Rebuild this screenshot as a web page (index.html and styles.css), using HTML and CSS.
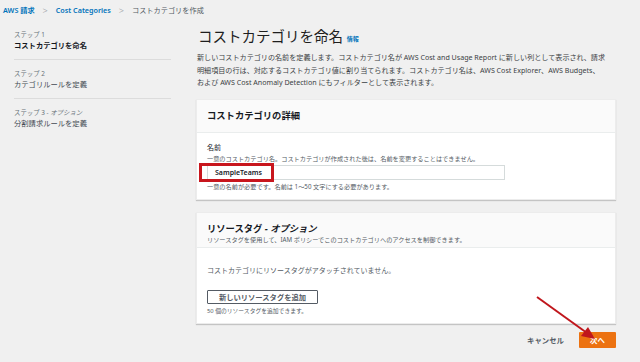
FILE: index.html
```html
<!DOCTYPE html>
<html lang="ja">
<head>
<meta charset="utf-8">
<link rel="stylesheet" href="styles.css">
</head>
<body>
<div class="page">
  <nav class="crumbs">
    <a class="crumb-link">AWS 請求</a>
    <span class="sep">&gt;</span>
    <a class="crumb-link">Cost Categories</a>
    <span class="sep">&gt;</span>
    <span class="crumb-current">コストカテゴリを作成</span>
  </nav>
  <div class="layout">
    <aside class="steps">
      <div class="step">
        <div class="step-label">ステップ 1</div>
        <div class="step-title active">コストカテゴリを命名</div>
      </div>
      <div class="step">
        <div class="step-label">ステップ 2</div>
        <div class="step-title">カテゴリルールを定義</div>
      </div>
      <div class="step last">
        <div class="step-label">ステップ 3 <i>- オプション</i></div>
        <div class="step-title">分割請求ルールを定義</div>
      </div>
    </aside>
    <main class="main">
      <h1 class="title">コストカテゴリを命名 <span class="info">情報</span></h1>
      <p class="desc">新しいコストカテゴリの名前を定義します。コストカテゴリ名が AWS Cost and Usage Report に新しい列として表示され、請求<br>明細項目の行は、対応するコストカテゴリ値に割り当てられます。コストカテゴリ名は、AWS Cost Explorer、AWS Budgets、<br>および AWS Cost Anomaly Detection にもフィルターとして表示されます。</p>

      <section class="card">
        <div class="card-head card-head-1">
          <h2 class="card-title">コストカテゴリの詳細</h2>
        </div>
        <div class="card-body body-1">
          <div class="field-label">名前</div>
          <div class="field-desc">一意のコストカテゴリ名。コストカテゴリが作成された後は、名前を変更することはできません。</div>
          <div class="input-wrap">
            <div class="input">SampleTeams</div>
            <div class="highlight"></div>
          </div>
          <div class="field-hint">一意の名前が必要です。名前は 1～50 文字にする必要があります。</div>
        </div>
      </section>

      <section class="card card-2">
        <div class="card-head card-head-2">
          <h2 class="card-title">リソースタグ <i>- オプション</i></h2>
          <div class="card-sub">リソースタグを使用して、IAM ポリシーでこのコストカテゴリへのアクセスを制御できます。</div>
        </div>
        <div class="card-body body-2">
          <div class="empty">コストカテゴリにリソースタグがアタッチされていません。</div>
          <button class="btn-add">新しいリソースタグを追加</button>
          <div class="tag-hint">50 個のリソースタグを追加できます。</div>
        </div>
      </section>

      <div class="actions">
        <button class="btn-cancel">キャンセル</button>
        <button class="btn-next">次へ</button>
      </div>
    </main>
  </div>
  <svg class="arrow" width="640" height="362" viewBox="0 0 640 362">
    <line x1="537" y1="297" x2="587" y2="333" stroke="#c0161c" stroke-width="2"/>
    <polygon points="595,339 581,336 588,327" fill="#c0161c"/>
  </svg>
</div>
</body>
</html>
```
FILE: styles.css
```css
* { box-sizing: border-box; }
html, body { margin: 0; padding: 0; }
body {
  background: #f0f0f0;
  font-family: "Noto Sans", "Noto Sans CJK JP", sans-serif;
  color: #16191f;
  width: 640px;
  height: 362px;
  overflow: hidden;
}
.page { position: relative; width: 640px; height: 362px; }

.crumbs {
  height: 21px;
  line-height: 21px;
  padding-left: 3px;
  font-size: 7.2px;
  display: flex;
  align-items: center;
  white-space: nowrap;
}
.crumb-link { color: #0073bb; font-weight: 600; }
.sep { color: #9aa0a6; margin: 0 8px; font-size: 9px; font-weight: 300; }
.crumb-current { color: #545b64; }

.layout { display: flex; }
.steps { width: 196px; padding: 0 25px 0 14px; }
.step {
  padding: 8px 0 8px;
  border-bottom: 1px solid #dcdcdc;
}
.step.last { border-bottom: none; }
.step-label { font-size: 6.4px; line-height: 11px; color: #687078; }
.step-title { font-size: 7.3px; line-height: 11px; color: #444b53; }
.step-title.active { color: #16191f; font-weight: 700; }

.main { width: 420px; }
.title {
  margin: 5px 0 0 2px;
  font-size: 14.5px;
  line-height: 20px;
  font-weight: 400;
  color: #1e1e1e;
}
.info { font-size: 6px; color: #0073bb; font-weight: 700; vertical-align: 1px; }
.desc {
  margin: 2px 0 0 1px;
  font-size: 7.1px;
  line-height: 12.5px;
  color: #3b3f44;
  white-space: nowrap;
}

.card {
  margin-top: 10px;
  background: #fff;
  border: 1px solid #ececec;
  box-shadow: 0 1px 1px rgba(0,0,0,0.18);
}
.card-2 { margin-top: 12px; }
.card-head {
  background: #fafafa;
  border-bottom: 1px solid #eaeded;
  padding-left: 10px;
}
.card-head-1 { height: 33px; display: flex; align-items: center; }
.card-head-2 { height: 35px; padding-top: 10px; }
.card-title {
  margin: 0;
  font-size: 9.3px;
  line-height: 12px;
  font-weight: 700;
  color: #16191f;
}
.card-sub { font-size: 6.2px; line-height: 10px; color: #545b64; white-space: nowrap; }

.card-body { padding-left: 10px; }
.body-1 { padding-top: 10px; padding-bottom: 8px; }
.field-label { font-size: 7px; line-height: 10px; color: #16191f; }
.field-desc { font-size: 6.2px; line-height: 8px; margin-top: 2px; color: #545b64; white-space: nowrap; }
.input-wrap { position: relative; margin-top: 2px; width: 298px; }
.input {
  height: 15px;
  border: 1px solid #d5dbdb;
  background: #fff;
  padding-left: 7px;
  font-size: 7px;
  line-height: 13px;
  font-weight: 600;
  color: #16191f;
}
.highlight {
  position: absolute;
  left: -8px;
  top: -2px;
  width: 75px;
  height: 19px;
  border: 3px solid #c8161d;
}
.field-hint { font-size: 6.2px; line-height: 8px; margin-top: 3px; color: #545b64; white-space: nowrap; }

.body-2 { padding-top: 18px; padding-bottom: 7px; }
.empty { font-size: 7px; line-height: 10px; color: #545b64; white-space: nowrap; }
.btn-add {
  display: block;
  margin-top: 14px;
  width: 111px;
  height: 14px;
  background: #fff;
  border: 1px solid #545b64;
  border-radius: 1px;
  font-family: inherit;
  font-size: 7.3px;
  font-weight: 700;
  color: #545b64;
  padding: 0;
  line-height: 12px;
}
.tag-hint { margin-top: 2px; font-size: 5.8px; line-height: 10px; color: #545b64; white-space: nowrap; }

.actions {
  margin-top: 8px;
  display: flex;
  justify-content: flex-end;
  align-items: center;
  gap: 15px;
}
.btn-cancel {
  background: none;
  border: none;
  padding: 0;
  font-family: inherit;
  font-size: 7.4px;
  font-weight: 700;
  color: #545b64;
}
.btn-next {
  width: 37px;
  height: 16px;
  background: #ec7211;
  border: none;
  border-radius: 1px;
  padding: 0;
  font-family: inherit;
  font-size: 7.4px;
  font-weight: 700;
  color: #fff;
}

.arrow { position: absolute; left: 0; top: 0; pointer-events: none; }
```
